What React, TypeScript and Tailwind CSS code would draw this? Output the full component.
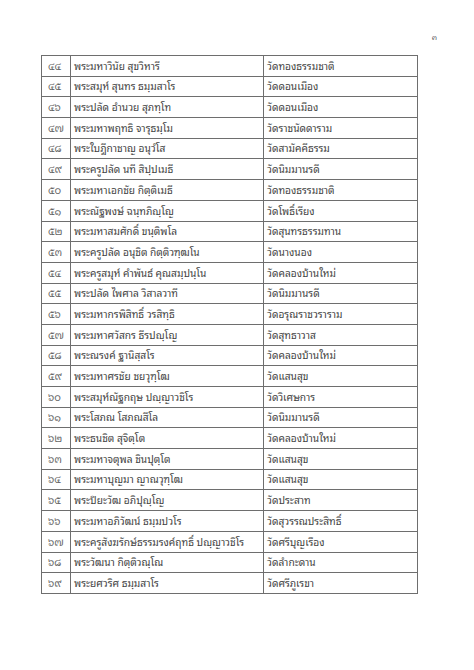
import React from "react";

type Row = { no: string; name: string; temple: string };

const rows: Row[] = [
  { no: "๔๔", name: "พระมหาวินัย สุขวิหารี", temple: "วัดทองธรรมชาติ" },
  { no: "๔๕", name: "พระสมุห์ สุนทร ธมฺมสาโร", temple: "วัดดอนเมือง" },
  { no: "๔๖", name: "พระปลัด อำนวย สุภทฺโท", temple: "วัดดอนเมือง" },
  { no: "๔๗", name: "พระมหาพฤทธิ จารุธมฺโม", temple: "วัดราชนัดดาราม" },
  { no: "๔๘", name: "พระใบฎีกาชาญ อนุวํโส", temple: "วัดสามัคคีธรรม" },
  { no: "๔๙", name: "พระครูปลัด นที สิปฺปเมธี", temple: "วัดนิมมานรดี" },
  { no: "๕๐", name: "พระมหาเอกชัย กิตฺติเมธี", temple: "วัดทองธรรมชาติ" },
  { no: "๕๑", name: "พระณัฐพงษ์ ฉนฺทภิญฺโญ", temple: "วัดโพธิ์เรียง" },
  { no: "๕๒", name: "พระมหาสมศักดิ์ ขนฺติพโล", temple: "วัดสุนทรธรรมทาน" },
  { no: "๕๓", name: "พระครูปลัด อนุชิต กิตฺติวฑฺฒโน", temple: "วัดนางนอง" },
  { no: "๕๔", name: "พระครูสมุห์ คำพันธ์ คุณสมฺปนฺโน", temple: "วัดคลองบ้านใหม่" },
  { no: "๕๕", name: "พระปลัด ไพศาล วิสาลวาที", temple: "วัดนิมมานรดี" },
  { no: "๕๖", name: "พระมหากรพิสิทธิ์ วรสิทฺธิ", temple: "วัดอรุณราชวราราม" },
  { no: "๕๗", name: "พระมหาศวัสกร ธีรปญฺโญ", temple: "วัดสุทธาวาส" },
  { no: "๕๘", name: "พระณรงค์ ฐานิสฺสโร", temple: "วัดคลองบ้านใหม่" },
  { no: "๕๙", name: "พระมหาศรชัย ชยวุฑฺโฒ", temple: "วัดแสนสุข" },
  { no: "๖๐", name: "พระสมุห์ณัฐกฤษ ปญฺญาวชิโร", temple: "วัดวิเศษการ" },
  { no: "๖๑", name: "พระโสภณ โสภณสีโล", temple: "วัดนิมมานรดี" },
  { no: "๖๒", name: "พระธนชิต สุจิตฺโต", temple: "วัดคลองบ้านใหม่" },
  { no: "๖๓", name: "พระมหาจตุพล ชินปุตฺโต", temple: "วัดแสนสุข" },
  { no: "๖๔", name: "พระมหาบุญมา ญาณวุฑฺโฒ", temple: "วัดแสนสุข" },
  { no: "๖๕", name: "พระปิยะวัฒ อภิปุญฺโญ", temple: "วัดประสาท" },
  { no: "๖๖", name: "พระมหาอภิวัฒน์ ธมฺมปวโร", temple: "วัดสุวรรณประสิทธิ์" },
  { no: "๖๗", name: "พระครูสังฆรักษ์ธรรมรงค์ฤทธิ์ ปญฺญาวชิโร", temple: "วัดศรีบุญเรือง" },
  { no: "๖๘", name: "พระวัฒนา กิตฺติวณฺโณ", temple: "วัดลำกะดาน" },
  { no: "๖๙", name: "พระยศวริศ ธมฺมสาโร", temple: "วัดศรีภูเรขา" },
];

export default function App() {
  return (
    <div className="w-[474px] h-[670px] bg-white pt-[33px] font-['Noto_Sans_Thai_Looped','Loma','Garuda','Norasi','Noto_Sans_Thai',sans-serif] text-[#444]">
      <div className="flex justify-end pr-[37px] h-[22px]">
        <span className="text-[7px] leading-[8px] text-[#555]">๓</span>
      </div>
      <table className="ml-[41px] w-[376px] border-collapse table-fixed text-[10.2px]">
        <colgroup>
          <col className="w-[29px]" />
          <col className="w-[193px]" />
          <col className="w-[154px]" />
        </colgroup>
        <tbody>
          {rows.map(r => (
            <tr key={r.no} className="h-[20.7px]">
              <td className="border border-[#6e6e6e] pl-[6px] p-0 text-[#666] leading-none whitespace-nowrap">{r.no}</td>
              <td className="border border-[#6e6e6e] pl-[3px] p-0 leading-none whitespace-nowrap">{r.name}</td>
              <td className="border border-[#6e6e6e] pl-[3px] p-0 leading-none whitespace-nowrap">{r.temple}</td>
            </tr>
          ))}
        </tbody>
      </table>
    </div>
  );
}
